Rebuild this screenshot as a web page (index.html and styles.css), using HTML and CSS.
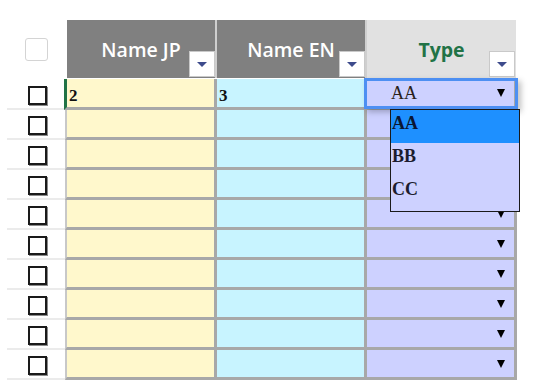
FILE: index.html
```html
<!DOCTYPE html>
<html>
<head>
<meta charset="utf-8">
<link rel="stylesheet" href="styles.css">
</head>
<body>
<div class="sheet">
  <div class="head">
    <div class="hcell hchk"><span class="hbox"></span></div>
    <div class="hcell hdark hjp">Name JP<span class="filter"><i></i></span></div>
    <div class="hcell hdark hen">Name EN<span class="filter"><i></i></span></div>
    <div class="hcell htype">Type<span class="filter"><i></i></span></div>
  </div>
  <div class="row first">
    <div class="chk"><span class="box"></span></div>
    <div class="jp active">2</div>
    <div class="en">3</div>
    <div class="type"><span class="val">AA</span><span class="arr"></span></div>
  </div>
  <div class="row"><div class="chk"><span class="box"></span></div><div class="jp"></div><div class="en"></div><div class="type"><span class="arr"></span></div></div>
  <div class="row"><div class="chk"><span class="box"></span></div><div class="jp"></div><div class="en"></div><div class="type"><span class="arr"></span></div></div>
  <div class="row"><div class="chk"><span class="box"></span></div><div class="jp"></div><div class="en"></div><div class="type"><span class="arr"></span></div></div>
  <div class="row"><div class="chk"><span class="box"></span></div><div class="jp"></div><div class="en"></div><div class="type"><span class="arr"></span></div></div>
  <div class="row"><div class="chk"><span class="box"></span></div><div class="jp"></div><div class="en"></div><div class="type"><span class="arr"></span></div></div>
  <div class="row"><div class="chk"><span class="box"></span></div><div class="jp"></div><div class="en"></div><div class="type"><span class="arr"></span></div></div>
  <div class="row"><div class="chk"><span class="box"></span></div><div class="jp"></div><div class="en"></div><div class="type"><span class="arr"></span></div></div>
  <div class="row"><div class="chk"><span class="box"></span></div><div class="jp"></div><div class="en"></div><div class="type"><span class="arr"></span></div></div>
  <div class="row"><div class="chk"><span class="box"></span></div><div class="jp"></div><div class="en"></div><div class="type"><span class="arr"></span></div></div>

  <div class="selected"></div>
  <ul class="list">
    <li class="hi">AA</li>
    <li>BB</li>
    <li>CC</li>
  </ul>
</div>
</body>
</html>
```
FILE: styles.css
```css
html, body {
  margin: 0;
  padding: 0;
  background: #ffffff;
  overflow: hidden;
}
.sheet {
  position: relative;
  margin: 20px 0 0 7px;
  width: 520px;
}
.head {
  display: grid;
  grid-template-columns: 58px 152px 150px 150px;
  height: 59px;
}
.hcell {
  position: relative;
  display: flex;
  align-items: center;
  justify-content: center;
  height: 58px;
  font-family: "Open Sans", sans-serif;
  font-weight: 600;
  font-size: 19.5px;
  box-sizing: border-box;
}
.hbox {
  width: 23px;
  height: 23px;
  box-sizing: border-box;
  border: 1px solid #d4d4d4;
  border-radius: 3px;
  background: #fff;
}
.hdark {
  background: #808080;
  color: #ffffff;
  border-right: 2px solid #cfcfcf;
}
.hjp {
  margin-left: 2px;
}
.htype {
  background: #e1e1e1;
  color: #217346;
  font-weight: 700;
  margin-right: 1px;
}
.filter {
  position: absolute;
  right: 0;
  bottom: 1px;
  width: 26px;
  height: 26px;
  box-sizing: border-box;
  background: #ffffff;
  border: 1px solid #c9c9c9;
  display: flex;
  align-items: center;
  justify-content: center;
}
.htype .filter {
  right: 1px;
}
.filter i {
  display: block;
  width: 0;
  height: 0;
  border-left: 5px solid transparent;
  border-right: 5px solid transparent;
  border-top: 5px solid #3d4b8c;
}
.row {
  display: grid;
  grid-template-columns: 58px 152px 150px 150px;
  height: 30px;
}
.row.first {
  height: 31px;
}
.row > div {
  box-sizing: border-box;
  border-bottom: 3px solid #a8a8a8;
  font-family: "Liberation Serif", serif;
  font-weight: 700;
  font-size: 17px;
  line-height: 20px;
  padding: 7px 0 0 2px;
  color: #111;
}
.row > .chk {
  border-bottom: 2px solid #ebebeb;
  padding: 6px 0 0 0;
  display: flex;
  justify-content: center;
}
.row.first > .chk {
  padding-top: 7px;
}
.box {
  display: block;
  width: 19px;
  height: 19px;
  box-sizing: border-box;
  border: 2px solid #1a1a1a;
  box-shadow: 1px 1px 0 #8a8a8a;
  background: #fff;
  margin-left: 3px;
}
.jp {
  background: #fff8cc;
  border-left: 2px solid #c8c8c8;
  border-right: 3px solid #a8a8a8;
}
.jp.active {
  border-left: 3px solid #217346;
  margin-left: -1px;
  padding-left: 2px;
}
.en {
  background: #c8f4ff;
  border-right: 3px solid #a8a8a8;
}
.type {
  background: #cdd1ff;
  border-right: 3px solid #a8a8a8;
  display: flex;
  align-items: center;
  justify-content: flex-end;
  padding: 0 9px 0 0 !important;
}
.row.first .type {
  justify-content: space-between;
  padding: 0 9px 0 24px !important;
}
.val {
  font-family: "Liberation Serif", serif;
  font-weight: 400;
  font-size: 18px;
  color: #2a1f1a;
}
.arr {
  display: block;
  width: 0;
  height: 0;
  border-left: 4px solid transparent;
  border-right: 4px solid transparent;
  border-top: 8px solid #000;
}
.selected {
  position: absolute;
  left: 357px;
  top: 58px;
  width: 154px;
  height: 31px;
  box-sizing: border-box;
  border: 3px solid #4d8ff2;
  box-shadow: 3px 3px 6px rgba(0, 0, 0, 0.25);
}
.list {
  position: absolute;
  left: 383px;
  top: 89px;
  width: 130px;
  margin: 0;
  padding: 0 0 2px 0;
  list-style: none;
  box-sizing: border-box;
  border: 1px solid #1a1a1a;
  background: #cdd1ff;
}
.list li {
  height: 33px;
  line-height: 26px;
  padding-left: 1px;
  font-family: "Liberation Serif", serif;
  font-weight: 700;
  font-size: 18px;
  color: #1c1c2e;
}
.list li.hi {
  background: #1e90ff;
  color: #0a1633;
}
```
